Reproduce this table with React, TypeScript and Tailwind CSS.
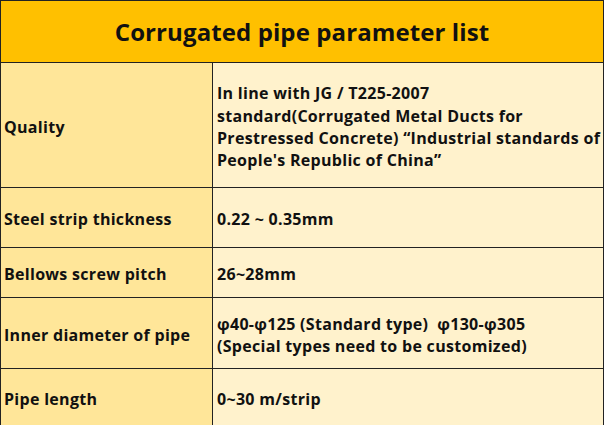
const rows: { label: string; lines: string[]; h: string }[] = [
  {
    label: "Quality",
    lines: [
      "In line with JG / T225-2007",
      "standard(Corrugated Metal Ducts for",
      "Prestressed Concrete) \u201cIndustrial standards of",
      "People's Republic of China\u201d",
    ],
    h: "h-[125px]",
  },
  { label: "Steel strip thickness", lines: ["0.22 ~ 0.35mm"], h: "h-[60px]" },
  { label: "Bellows screw pitch", lines: ["26~28mm"], h: "h-[50px]" },
  {
    label: "Inner diameter of pipe",
    lines: ["\u03c640-\u03c6125 (Standard type)  \u03c6130-\u03c6305", "(Special types need to be customized)"],
    h: "h-[71px]",
  },
  { label: "Pipe length", lines: ["0~30 m/strip"], h: "h-[56px]" },
];

export default function App() {
  return (
    <div
      className="w-[605px] h-[425px] overflow-hidden bg-white text-[#111]"
      style={{ fontFamily: '"Open Sans", "Noto Sans", sans-serif' }}
    >
      <div className="w-[604px] border border-[#222]">
        {/* Title */}
        <div className="h-[62px] bg-[#FFC000] border-b border-[#222] flex items-center justify-center">
          <span className="text-[24px] font-bold tracking-[0.1px]">Corrugated pipe parameter list</span>
        </div>

        {/* Rows */}
        {rows.map((r, i) => (
          <div
            key={r.label}
            className={`grid grid-cols-[212px_1fr] ${r.h} ${i < rows.length - 1 ? "border-b border-[#222]" : ""}`}
          >
            <div className="bg-[#FFE699] border-r border-[#222] flex items-center pl-[3px] pt-[3px] text-[16px] font-bold tracking-[0.3px]">
              {r.label}
            </div>
            <div className="bg-[#FFF2CC] flex flex-col justify-center pl-[4px] pt-[4px] text-[16px] font-bold tracking-[0.3px] leading-[22.4px] whitespace-pre">
              {r.lines.map((l) => (
                <span key={l}>{l}</span>
              ))}
            </div>
          </div>
        ))}
      </div>
    </div>
  );
}
